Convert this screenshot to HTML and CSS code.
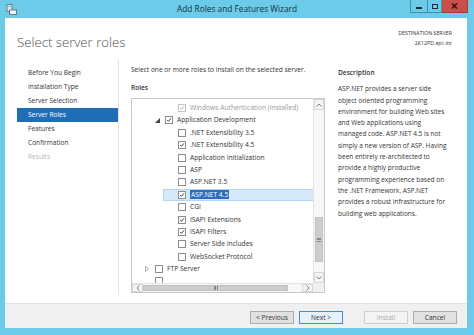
FILE: index.html
```html
<!DOCTYPE html>
<html>
<head>
<meta charset="utf-8">
<link rel="stylesheet" href="styles.css">
</head>
<body>
<div class="window">
  <div class="titlebar">
    <div class="tb-left">
      <svg class="app-icon" width="11" height="11" viewBox="0 0 11 11">
        <rect x="1" y="0.5" width="5" height="7" fill="#d8eef7" stroke="#6a7c88" stroke-width="1"/>
        <rect x="3.5" y="6" width="7" height="4.5" fill="#eef6fa" stroke="#6a7c88" stroke-width="1"/>
        <line x1="2.5" y1="2.5" x2="4.5" y2="2.5" stroke="#6a7c88" stroke-width="0.8"/>
      </svg>
    </div>
    <div class="tb-title">Add Roles and Features Wizard</div>
    <div class="tb-controls">
      <div class="ctl ctl-min"><span class="min-glyph"></span></div>
      <div class="ctl ctl-max"><span class="max-glyph"></span></div>
      <div class="ctl ctl-close">
        <svg width="7" height="6" viewBox="0 0 7 6"><path d="M1 0.5 L6 5.5 M6 0.5 L1 5.5" stroke="#3a1010" stroke-width="1.6"/></svg>
      </div>
    </div>
  </div>

  <div class="client">
    <div class="header">
      <div class="page-title">Select server roles</div>
      <div class="dest">
        <div>DESTINATION SERVER</div>
        <div>2K12PD.epc.int</div>
      </div>
    </div>

    <div class="body">
      <nav class="nav">
        <div class="nav-item">Before You Begin</div>
        <div class="nav-item">Installation Type</div>
        <div class="nav-item">Server Selection</div>
        <div class="nav-item active">Server Roles</div>
        <div class="nav-item">Features</div>
        <div class="nav-item">Confirmation</div>
        <div class="nav-item disabled">Results</div>
      </nav>

      <div class="content">
        <div class="roles-col">
          <div class="intro">Select one or more roles to install on the selected server.</div>
          <div class="label">Roles</div>
          <div class="listbox">
            <div class="tree">
              <div class="row l3 grey"><span class="tog"></span><span class="cb on"><svg viewBox="0 0 8 8"><path d="M1.5 4 L3.3 5.8 L6.6 1.8" /></svg></span><span class="lbl">Windows Authentication (Installed)</span></div>
              <div class="row l2"><span class="tog"><svg width="5" height="5" viewBox="0 0 5 5"><path d="M5 0 L5 5 L0 5 Z" fill="#444"/></svg></span><span class="cb on"><svg viewBox="0 0 8 8"><path d="M1.5 4 L3.3 5.8 L6.6 1.8" /></svg></span><span class="lbl">Application Development</span></div>
              <div class="row l3"><span class="tog"></span><span class="cb"></span><span class="lbl">.NET Extensibility 3.5</span></div>
              <div class="row l3"><span class="tog"></span><span class="cb on"><svg viewBox="0 0 8 8"><path d="M1.5 4 L3.3 5.8 L6.6 1.8" /></svg></span><span class="lbl">.NET Extensibility 4.5</span></div>
              <div class="row l3"><span class="tog"></span><span class="cb"></span><span class="lbl">Application Initialization</span></div>
              <div class="row l3"><span class="tog"></span><span class="cb"></span><span class="lbl">ASP</span></div>
              <div class="row l3"><span class="tog"></span><span class="cb"></span><span class="lbl">ASP.NET 3.5</span></div>
              <div class="row l3 sel"><span class="tog"></span><span class="cb on"><svg viewBox="0 0 8 8"><path d="M1.5 4 L3.3 5.8 L6.6 1.8" /></svg></span><span class="lbl"><span class="hl">ASP.NET 4.5</span></span></div>
              <div class="row l3"><span class="tog"></span><span class="cb"></span><span class="lbl">CGI</span></div>
              <div class="row l3"><span class="tog"></span><span class="cb on"><svg viewBox="0 0 8 8"><path d="M1.5 4 L3.3 5.8 L6.6 1.8" /></svg></span><span class="lbl">ISAPI Extensions</span></div>
              <div class="row l3"><span class="tog"></span><span class="cb on"><svg viewBox="0 0 8 8"><path d="M1.5 4 L3.3 5.8 L6.6 1.8" /></svg></span><span class="lbl">ISAPI Filters</span></div>
              <div class="row l3"><span class="tog"></span><span class="cb"></span><span class="lbl">Server Side Includes</span></div>
              <div class="row l3"><span class="tog"></span><span class="cb"></span><span class="lbl">WebSocket Protocol</span></div>
              <div class="row l1"><span class="tog"><svg width="4" height="6" viewBox="0 0 4 6"><path d="M0.5 0.5 L3.5 3 L0.5 5.5 Z" fill="none" stroke="#999" stroke-width="0.8"/></svg></span><span class="cb"></span><span class="lbl">FTP Server</span></div>
              <div class="row l1"><span class="tog"></span><span class="cb"></span><span class="lbl"></span></div>
            </div>
            <div class="vscroll">
              <div class="sb-btn"><svg width="6" height="4" viewBox="0 0 6 4"><path d="M0.5 3.5 L3 1 L5.5 3.5" fill="none" stroke="#777" stroke-width="0.9"/></svg></div>
              <div class="vtrack"><div class="vthumb"><span class="grip-h"></span></div></div>
              <div class="sb-btn"><svg width="6" height="4" viewBox="0 0 6 4"><path d="M0.5 0.5 L3 3 L5.5 0.5" fill="none" stroke="#777" stroke-width="0.9"/></svg></div>
            </div>
            <div class="hscroll">
              <div class="sb-btn h"><svg width="4" height="6" viewBox="0 0 4 6"><path d="M3.5 0.5 L1 3 L3.5 5.5" fill="none" stroke="#777" stroke-width="0.9"/></svg></div>
              <div class="htrack"><div class="hthumb"><span class="grip-v"></span></div></div>
              <div class="sb-btn h"><svg width="4" height="6" viewBox="0 0 4 6"><path d="M0.5 0.5 L3 3 L0.5 5.5" fill="none" stroke="#777" stroke-width="0.9"/></svg></div>
            </div>
            <div class="corner"></div>
          </div>
        </div>

        <div class="desc-col">
          <div class="label">Description</div>
          <p class="desc">ASP.NET provides a server side<br>object oriented programming<br>environment for building Web sites<br>and Web applications using<br>managed code. ASP.NET 4.5 is not<br>simply a new version of ASP. Having<br>been entirely re-architected to<br>provide a highly productive<br>programming experience based on<br>the .NET Framework, ASP.NET<br>provides a robust infrastructure for<br>building web applications.</p>
        </div>
      </div>
    </div>

    <div class="footer">
      <button class="btn">&lt; Previous</button>
      <button class="btn default">Next &gt;</button>
      <button class="btn disabled gap">Install</button>
      <button class="btn">Cancel</button>
    </div>
  </div>
</div>
</body>
</html>
```

FILE: styles.css
```css
* { box-sizing: border-box; }
html, body { margin: 0; padding: 0; }
body {
  font-family: "Open Sans", "Noto Sans", sans-serif;
  color: #333;
}
.window {
  width: 474px;
  height: 335px;
  background: #6ccbe8;
  display: flex;
  flex-direction: column;
}
.titlebar {
  height: 18px;
  display: grid;
  grid-template-columns: 1fr auto 1fr;
  align-items: start;
}
.tb-left { padding: 4px 0 0 6px; }
.app-icon { display: block; }
.tb-title {
  font-size: 8.3px;
  line-height: 18px;
  color: #14323f;
}
.tb-controls {
  justify-self: end;
  display: flex;
  margin-right: 6px;
}
.ctl {
  height: 13px;
  display: flex;
  align-items: center;
  justify-content: center;
  border: 1px solid #3f8fad;
  border-top: none;
}
.ctl-min { width: 17px; border-right: none; }
.ctl-max { width: 15px; }
.ctl-close { width: 26px; background: #c9504a; border-color: #a83c37; border-left: none; }
.min-glyph { width: 6px; height: 2px; background: #1a2b33; margin-top: 4px; }
.max-glyph { width: 6px; height: 5px; border: 1.5px solid #1a2b33; }

.client {
  flex: 1;
  margin: 0 7px 7px 5px;
  background: #fff;
  display: flex;
  flex-direction: column;
}
.header {
  height: 42px;
  display: flex;
  justify-content: space-between;
  padding: 0 15px 0 12px;
}
.page-title {
  font-size: 13.2px;
  font-weight: 300;
  color: #505050;
  padding-top: 14px;
  line-height: 20px;
}
.dest {
  text-align: right;
  font-size: 5.3px;
  line-height: 10px;
  color: #333;
  padding-top: 10px;
}
.body {
  flex: 1;
  display: flex;
}
.nav {
  width: 114px;
  border-right: 1px solid #e2e2e2;
  padding-top: 6px;
  margin-bottom: 8px;
}
.nav-item {
  margin-left: 12px;
  height: 14px;
  line-height: 14px;
  padding-left: 11px;
  font-size: 6.6px;
  color: #333;
}
.nav-item.active { background: #1f6db5; color: #fff; }
.nav-item.disabled { color: #b8b8b8; }

.content {
  display: flex;
  padding-left: 12px;
}
.roles-col { width: 194px; }
.intro {
  padding-top: 5px;
  font-size: 6.6px;
  line-height: 10px;
  white-space: nowrap;
}
.label {
  margin-top: 8px;
  font-size: 6.6px;
  line-height: 10px;
  font-weight: 600;
  color: #333;
}
.listbox {
  margin-top: 5px;
  height: 195px;
  border: 1px solid #c8c8c8;
  display: grid;
  grid-template-columns: 1fr 11px;
  grid-template-rows: 1fr 9px;
}
.tree {
  padding-top: 2.8px;
  overflow: hidden;
  font-size: 6.7px;
}
.row {
  height: 12.4px;
  display: flex;
  align-items: center;
  white-space: nowrap;
}
.row.l1 { padding-left: 13px; }
.row.l2 { padding-left: 23px; }
.row.l3 { padding-left: 36px; }
.row.l3.sel {
  margin-left: 31px;
  padding-left: 4px;
  background: #d5e9fb;
  border: 1px solid #b4d6f5;
  border-right: none;
}
.tog {
  width: 10px;
  height: 8px;
  display: flex;
  align-items: center;
  justify-content: flex-start;
}
.cb {
  width: 8px;
  height: 8px;
  border: 1px solid #8d8d8d;
  background: #fff;
  margin-right: 4px;
  flex: none;
}
.cb svg { display: block; width: 6px; height: 6px; }
.cb path { fill: none; stroke: #2a2a2a; stroke-width: 1.2; }
.grey .cb { border-color: #c4c4c4; }
.grey .cb path { stroke: #a8a8a8; }
.grey .lbl { color: #9a9a9a; }
.lbl { color: #333; line-height: 12px; }
.hl { background: #2f6cc0; color: #fff; padding: 0 1px; }

.vscroll {
  border-left: 1px solid #e4e4e4;
  background: #f7f7f7;
  display: flex;
  flex-direction: column;
}
.sb-btn {
  height: 11px;
  display: flex;
  align-items: center;
  justify-content: center;
  background: #f4f4f4;
  border: 1px solid #d8d8d8;
}
.sb-btn.h { height: auto; width: 11px; }
.vtrack {
  flex: 1;
  padding-top: 107px;
  padding-left: 1px;
  padding-right: 1px;
}
.vthumb {
  height: 45px;
  background: #cdcdcd;
  border: 1px solid #c0c0c0;
  display: flex;
  align-items: center;
  justify-content: center;
}
.grip-h {
  width: 4px;
  height: 4px;
  border-top: 1px solid #888;
  border-bottom: 1px solid #888;
  background: linear-gradient(#888, #888) center / 100% 1px no-repeat;
}
.hscroll {
  border-top: 1px solid #e4e4e4;
  background: #f7f7f7;
  display: flex;
}
.htrack {
  flex: 1;
  padding: 1px 14px 1px 0;
}
.hthumb {
  height: 100%;
  background: #cdcdcd;
  border: 1px solid #c0c0c0;
  display: flex;
  align-items: center;
  justify-content: center;
}
.grip-v {
  width: 4px;
  height: 4px;
  border-left: 1px solid #888;
  border-right: 1px solid #888;
  background: linear-gradient(#888, #888) center / 1px 100% no-repeat;
}
.corner { background: #f0f0f0; }

.desc-col {
  margin-left: 13px;
  width: 124px;
}
.desc {
  margin: 5.3px 0 0;
  font-size: 6.5px;
  line-height: 11.3px;
  color: #333;
  white-space: nowrap;
}

.footer {
  height: 25px;
  background: #f0f0f0;
  border-top: 1px solid #e2e2e2;
  display: flex;
  justify-content: flex-end;
  align-items: flex-start;
  padding: 7px 10px 0 0;
  gap: 5px;
}
.btn {
  width: 44px;
  height: 13px;
  padding: 0;
  font-family: "Open Sans", "Noto Sans", sans-serif;
  font-size: 6.6px;
  line-height: 11px;
  color: #333;
  background: #e1e1e1;
  border: 1px solid #adadad;
}
.btn.default { background: #e5f1fb; border-color: #4d8ac4; }
.btn.disabled { background: #f4f4f4; border-color: #cfcfcf; color: #a8a8a8; }
.btn.gap { margin-left: 16px; }
```
